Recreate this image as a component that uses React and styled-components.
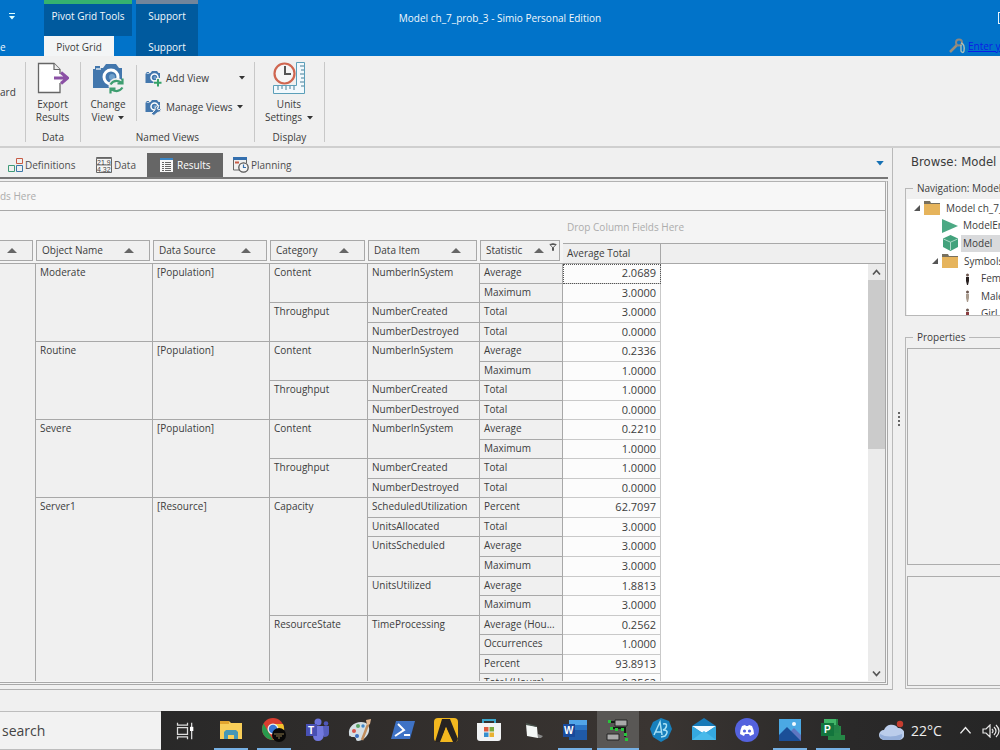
import React from "react";
import styled, { createGlobalStyle } from "styled-components";

const GlobalStyle = createGlobalStyle`
  * { box-sizing: border-box; }
  body {
    margin: 0;
    overflow: hidden;
    background: #f0f0f0;
    color: #3c3c3c;
    font-family: "Open Sans", "Noto Sans", sans-serif;
    font-size: 10px;
    line-height: 13px;
  }
  button, input { font: inherit; color: inherit; }
  button { padding: 0; border: 0; background: none; white-space: nowrap; }
  ul { list-style: none; margin: 0; padding: 0; }
  svg { display: block; flex: none; }
`;

const Window = styled.div`
  display: flex;
  flex-direction: column;
  height: 100vh;
  overflow: hidden;
`;

/* ---------- title bar ---------- */
const TitleBar = styled.header`
  display: grid;
  flex: none;
  height: 56px;
  background: #0173c9;
  color: #f2f8fc;
`;
const TitleRow = styled.div`
  grid-area: 1 / 1;
  display: flex;
  min-width: 0;
`;
const AppTitle = styled.h1`
  grid-area: 1 / 1;
  margin: 0;
  padding-top: 12px;
  text-align: center;
  font-size: 10px;
  font-weight: 400;
  line-height: 13px;
`;
const QuickAccess = styled.div`
  display: flex;
  flex-direction: column;
  justify-content: space-between;
  width: 44px;
  padding: 13px 0 2px;
  button { align-self: flex-start; }
`;
const QuickArrow = styled.button`
  margin-left: 9px;
`;
const ToolTab = styled.div`
  display: flex;
  flex-direction: column;
  width: ${(p) => p.$width}px;
  margin-right: 4px;
  border-top: ${(p) => p.$line};
  background: linear-gradient(#005a9e, #005a9e) no-repeat;
  background-size: 100% ${(p) => (p.$full ? "100%" : "32px")};
`;
const ToolCaption = styled.div`
  height: ${(p) => p.$h}px;
  padding-top: 6px;
  text-align: center;
  white-space: nowrap;
`;
const RibbonTab = styled.button`
  align-self: ${(p) => (p.$active ? "flex-start" : "stretch")};
  flex: 1;
  width: ${(p) => (p.$active ? "70px" : "auto")};
  padding: 3px 0 0;
  background: ${(p) => (p.$active ? "#f3f5f6" : "transparent")};
  color: ${(p) => (p.$active ? "#3c3c3c" : "#f2f8fc")};
`;
const Account = styled.div`
  display: flex;
  flex-direction: column;
  justify-content: space-between;
  align-items: flex-end;
  width: 51px;
  margin-left: auto;
  padding: 12px 0 2px;
  overflow: hidden;
`;
const WindowButton = styled.button`
  width: 2px;
  height: 12px;
  border: 1px solid #e8f3fb;
  border-right: 0;
`;
const License = styled.div`
  display: flex;
  align-items: center;
  gap: 2px;
  width: 100%;
  white-space: nowrap;
  a { color: #0a1ee6; }
`;

/* ---------- ribbon ---------- */
const Ribbon = styled.section`
  display: flex;
  flex: none;
  height: 92px;
  padding: 6px 0 4px;
  border-bottom: 2px solid #cfcfcf;
`;
const Group = styled.div`
  display: flex;
  flex-direction: column;
  width: ${(p) => p.$width}px;
  border-right: 1px solid #c8c8c8;
`;
const GroupBody = styled.div`
  display: flex;
  flex: 1;
`;
const GroupLabel = styled.div`
  flex: none;
  height: 11px;
  text-align: center;
`;
const BigButton = styled.button`
  display: flex;
  flex-direction: column;
  align-items: center;
  justify-content: flex-start;
  flex: ${(p) => (p.$width ? "none" : "1")};
  width: ${(p) => (p.$width ? p.$width + "px" : "auto")};
  gap: 4px;
  padding-right: 1px;
`;
const MenuLine = styled.span`
  display: flex;
  align-items: center;
  justify-content: center;
  gap: 5px;
`;
const SmallButtons = styled.div`
  display: flex;
  flex: 1;
  flex-direction: column;
  gap: 11px;
  margin: 3px 0 10px;
  padding: 4px 9px 0 8px;
  border-left: 1px solid #c8c8c8;
`;
const SmallButton = styled.button`
  display: flex;
  align-items: center;
  gap: 4px;
  height: 18px;
  svg:last-child { margin-left: ${(p) => (p.$push ? "auto" : "0")}; }
`;
const Clipped = styled.span`
  padding-top: 24px;
`;

/* ---------- workspace ---------- */
const Workspace = styled.div`
  display: flex;
  flex: 1;
  min-height: 0;
`;
const Document = styled.main`
  display: flex;
  flex: 1;
  flex-direction: column;
  min-width: 0;
  padding-right: 4px;
  padding-bottom: 4px;
  border-right: 1px solid #b9b9b9;
  border-bottom: 1px solid #b0b0b0;
`;
const Tabs = styled.nav`
  display: flex;
  flex: none;
  align-items: stretch;
  height: 31px;
  padding-top: 5px;
  border-bottom: 2px solid #767676;
`;
const Tab = styled.button`
  display: flex;
  align-items: center;
  gap: ${(p) => p.$gap || 2}px;
  width: ${(p) => p.$width}px;
  padding-left: ${(p) => p.$inset}px;
  background: ${(p) => (p.$active ? "#666" : "transparent")};
  color: ${(p) => (p.$active ? "#fff" : "#4e4e4e")};
`;
const TabMenu = styled.button`
  margin-left: auto;
  padding: 0 4px 4px 0;
`;
const Pivot = styled.section`
  display: flex;
  flex: 1;
  flex-direction: column;
  min-height: 0;
  margin-top: 2px;
  padding-bottom: 1px;
  border: 1px solid #b2b2b2;
  border-left: 0;
  border-right: 3px double #a8a8a8;
  border-bottom: 3px double #a8a8a8;
  background: #f4f4f4;
`;
const DropArea = styled.div`
  flex: none;
  height: ${(p) => p.$h}px;
  padding: ${(p) => p.$top}px 0 0 ${(p) => p.$left}px;
  border-bottom: ${(p) => (p.$line ? "1px solid #a8a8a8" : "0")};
  background: ${(p) => (p.$line ? "#f7f7f7" : "#f4f4f4")};
  color: #acacac;
`;
const GridArea = styled.div`
  display: flex;
  flex: 1;
  min-height: 0;
  overflow: hidden;
  background: #fff;
`;
const TableClip = styled.div`
  flex: 1;
  min-width: 0;
  overflow: hidden;
`;
const Table = styled.table`
  width: 100%;
  height: 455px;
  border-collapse: separate;
  border-spacing: 0;
  table-layout: fixed;
`;
const HeadCell = styled.th`
  height: 25px;
  padding: 1px 3px 2px 0;
  border-bottom: 1px solid #a8a8a8;
  background: #f4f4f4;
  font-weight: 400;
  vertical-align: top;
`;
const ValueHead = styled.th`
  height: 25px;
  padding: 4px 0 0;
  border-bottom: 1px solid #a8a8a8;
  background: #f4f4f4;
  font-weight: 400;
  text-align: left;
  div {
    height: 20px;
    padding: 3px 4px 0;
    border-top: 1px solid #a8a8a8;
    border-right: ${(p) => (p.$last ? "0" : "1px solid #a8a8a8")};
    background: #efefef;
  }
`;
const FieldButton = styled.button`
  display: flex;
  align-items: center;
  justify-content: space-between;
  width: 100%;
  height: 21px;
  padding: 0 ${(p) => (p.$filter ? 2 : 15)}px 0 5px;
  border: 1px solid #a8a8a8;
  border-left-width: ${(p) => (p.$cut ? 0 : 1)}px;
  background: #f0f0f0;
  svg + svg { align-self: flex-start; margin-top: 2px; }
`;
const Arrows = styled.span`
  display: flex;
  align-items: center;
  align-self: stretch;
  gap: 5px;
`;
const Cell = styled.td`
  height: 19px;
  padding: 2px 1px 0 4px;
  overflow: hidden;
  border-right: 1px solid #a8a8a8;
  border-bottom: 1px solid #a8a8a8;
  background: #f0f0f0;
  vertical-align: top;
  white-space: nowrap;
  text-overflow: ellipsis;
`;
const ValueCell = styled(Cell)`
  padding: 2px 4px 0;
  border-color: #c9c9c9;
  background: #fcfcfc;
  font-size: 11px;
  text-align: right;
  outline: ${(p) => (p.$focus ? "1px dotted #555" : "none")};
  outline-offset: -1px;
`;
const Blank = styled.td`
  background: #fff;
`;
const Body = styled.tbody`
  tr { height: 19px; }
`;
const ScrollColumn = styled.div`
  display: flex;
  flex: none;
  flex-direction: column;
  width: 17px;
  background: #ebebeb;
`;
const ScrollCap = styled.div`
  height: 25px;
  padding-top: 4px;
  background: #f4f4f4;
  div { height: 21px; border: solid #a8a8a8; border-width: 1px 0; background: #efefef; }
`;
const ScrollButton = styled.button`
  display: grid;
  place-items: center;
  height: 16px;
`;
const ScrollTrack = styled.div`
  flex: 1;
`;
const ScrollThumb = styled.div`
  height: 44%;
  background: #cbcbcb;
`;

/* ---------- side panel ---------- */
const Splitter = styled.div`
  display: grid;
  place-items: center;
  width: 12px;
`;
const Side = styled.aside`
  display: flex;
  flex-direction: column;
  width: 95px;
  padding: 6px 0 1px;
  overflow: hidden;
`;
const SideTitle = styled.h2`
  margin: 0 0 12px 6px;
  font-family: "DejaVu Sans Condensed", "DejaVu Sans", sans-serif;
  font-size: 13px;
  font-weight: 400;
  line-height: 16px;
  white-space: nowrap;
`;
const Panel = styled.fieldset`
  display: flex;
  flex: ${(p) => (p.$grow ? "1" : "none")};
  flex-direction: column;
  min-width: 0;
  margin: 0 0 ${(p) => (p.$grow ? 0 : 15)}px;
  padding: ${(p) => (p.$grow ? "4px 0 2px 1px" : "4px 0 0 1px")};
  border: 1px solid #b8b8b8;
  border-right: 0;
  legend { margin-left: 6px; padding: 0 4px; white-space: nowrap; }
`;
const Tree = styled.ul`
  height: 116px;
  overflow: hidden;
  background: #fff;
`;
const TreeRow = styled.li`
  display: flex;
  align-items: center;
  gap: ${(p) => p.$gap || 3}px;
  height: ${(p) => (p.$tight ? 17 : 18)}px;
  padding-left: ${(p) => p.$indent}px;
  button {
    flex: 1;
    height: 17px;
    padding-left: 2px;
    background: ${(p) => (p.$selected ? "#d9dadc" : "transparent")};
    text-align: left;
  }
`;
const PropertyBox = styled.div`
  flex: ${(p) => p.$flex} 1 0;
  margin-bottom: ${(p) => p.$gap}px;
  border: 1px solid #adadad;
  border-right: 0;
`;
const StatusBar = styled.div`
  flex: none;
  height: 21px;
`;

/* ---------- taskbar ---------- */
const Taskbar = styled.footer`
  display: flex;
  flex: none;
  height: 39px;
  background: linear-gradient(90deg, #232526, #332f2d 45%, #3a3532 65%, #2a2929 85%, #262626);
  color: #eee;
`;
const Search = styled.input`
  width: 161px;
  padding: 0 3px 0 2px;
  border: 1px solid #bdbdbd;
  border-width: 1px 0;
  border-radius: 0;
  background: #f2f2f2;
  color: #444;
  font-size: 14px;
`;
const TaskButton = styled.button`
  display: grid;
  place-items: center;
  width: ${(p) => p.$width || 43}px;
  height: 39px;
  background: ${(p) => (p.$active ? "linear-gradient(#595755, #595755) center / 42px 100% no-repeat" : "none")};
`;
const TaskSlot = styled.span`
  display: grid;
  place-items: center;
  width: ${(p) => (p.$wide ? 42 : 34)}px;
  height: 39px;
  border-bottom: 2px solid ${(p) => (p.$open ? "#76b0e4" : "transparent")};
`;
const Tray = styled.div`
  display: flex;
  flex: none;
  align-items: center;
  width: 121px;
  margin-left: auto;
  overflow: hidden;
`;
const Weather = styled.button`
  display: flex;
  align-items: center;
  gap: 7px;
  width: 84px;
  font-size: 14px;
`;
const TrayButton = styled.button`
  margin-right: 10px;
`;

/* ---------- small glyphs ---------- */
const Down = ({ color = "#333", w = 6 }) => (
  <svg width={w} height={w === 6 ? 4 : 5} viewBox="0 0 6 4"><path d="M0 0h6L3 3.6z" fill={color} /></svg>
);
const Up = () => (
  <svg width="10" height="5" viewBox="0 0 10 5"><path d="M0 5h10L5 0z" fill="#666" /></svg>
);
const Filter = () => (
  <svg width="8" height="8" viewBox="0 0 8 8"><path d="M.8 1.5Q4-.2 7.2 1.5L4.5 4.2V7.5h-1V4.2zM1.2 1.5h5.6" fill="none" stroke="#555" /></svg>
);
const Chevron = ({ flip, color = "#555", w = 9, s = 1.7 }) => (
  <svg width={w} height={w} viewBox="0 0 9 9"><path d={flip ? "M1 2.5 4.5 6.5 8 2.5" : "M1 6.5 4.5 2.5 8 6.5"} fill="none" stroke={color} strokeWidth={s} /></svg>
);
const ExportIcon = () => (
  <svg width="32" height="32" viewBox="0 0 32 32">
    <path d="M23 12V7.500L17 1.500H1.500V30.500H23V21" fill="#fff" stroke="#666" strokeWidth="1.300" />
    <path d="M17 1.500V7.500h6" fill="#eee" stroke="#666" strokeWidth="1.200" />
    <path d="M17 16h12M24 10.500l6.500 5.500-6.500 5.500" fill="none" stroke="#8b50a5" strokeWidth="3" />
  </svg>
);
const Camera = () => (
  <>
    <path d="M1 7h2V4h5v2h3l3-4h10l3 4h3v20H1z" fill="#4377ad" />
    <path d="M4 7h5" stroke="#dce9f3" strokeWidth="1.500" />
    <circle cx="19" cy="15" r="7" fill="#4377ad" stroke="#fff" strokeWidth="3" />
    <circle cx="20" cy="15" r="3" fill="#6fa0cc" />
  </>
);
const ChangeIcon = () => (
  <svg width="32" height="32" viewBox="0 0 32 32">
    <Camera />
    <circle cx="24.500" cy="24" r="8" fill="#f0f0f0" />
    <path d="M18.500 22.500q4-6 11-2M30.500 16.500v5h-5M30.500 25.500q-4 6-11 2M18.500 31.500v-5h5" fill="none" stroke="#3f9e70" strokeWidth="2.200" />
  </svg>
);
const AddViewIcon = () => (
  <svg width="17" height="17" viewBox="0 0 34 34">
    <Camera />
    <path d="M26 16v18M17 25h18" stroke="#f0f0f0" strokeWidth="8" />
    <path d="M26 18v15M18 25.500h15" stroke="#35a268" strokeWidth="4" />
  </svg>
);
const ManageIcon = () => (
  <svg width="17" height="17" viewBox="0 0 34 34">
    <Camera />
    <path d="M12 30 20 22q-1-9 8-9l-4 6 4 3 4-4q1 8-7 9l-7 6z" fill="#4377ad" stroke="#f0f0f0" strokeWidth="2" />
  </svg>
);
const UnitsIcon = () => (
  <svg width="32" height="32" viewBox="0 0 32 32">
    <path d="M23.500.500h8v31H.500v-8h23z" fill="#f2f9fd" stroke="#5b9fb9" />
    <path d="M5 24v4M9 24v3M13 24v4M17 24v3M21 24v4M31 4h-4M31 8h-3M31 12h-4M31 16h-3M31 20h-4M31 24h-3" stroke="#467f98" />
    <circle cx="11.500" cy="11.500" r="10" fill="#f6f6f6" stroke="#cf6650" strokeWidth="2.200" />
    <path d="M12 4v8h6" fill="none" stroke="#555" strokeWidth="2" />
  </svg>
);
const KeyIcon = () => (
  <svg width="17" height="16" viewBox="0 0 17 16">
    <path d="M1 14 8 7" stroke="#9a8e79" strokeWidth="2.500" />
    <circle cx="10" cy="4.500" r="3" fill="none" stroke="#8c8880" strokeWidth="2" />
    <path d="M12 5q4 1 3 8-1 3-3 0V7" fill="none" stroke="#a9bfb9" strokeWidth="1.400" />
  </svg>
);
const DefinitionsIcon = () => (
  <svg width="15" height="16" viewBox="0 0 15 16" fill="none">
    <path d="M8.500 1.500h6v5h-6z" stroke="#c75b45" /><path d="M.500 8.500h6v6h-6z" stroke="#3e9b78" /><path d="M8.500 8.500h6v6h-6z" stroke="#3c78a8" />
  </svg>
);
const DataIcon = () => (
  <svg width="16" height="16" viewBox="0 0 16 16">
    <path d="M.500 .500h15v15H.500z" fill="#f5f5f5" stroke="#666" />
    <path d="M0 1.500h16M0 8h16" stroke="#777" />
    <g fill="#444" fontFamily="Liberation Sans" fontSize="7"><text x="1" y="7.500">21.9</text><text x="1" y="14.500">4.32</text></g>
  </svg>
);
const ResultsIcon = () => (
  <svg width="13" height="14" viewBox="0 0 13 14">
    <path d="M0 0h13v14H0z" fill="#f8f8f8" /><path d="M0 0h13v2H0z" fill="#3c86c5" />
    <path d="M2 4.500h2M5 4.500h6M2 6.500h2M5 6.500h6M2 8.500h2M5 8.500h6M2 10.500h2M5 10.500h6M2 12.500h2M5 12.500h6" stroke="#666" />
  </svg>
);
const PlanningIcon = () => (
  <svg width="16" height="16" viewBox="0 0 16 16">
    <path d="M.500 1v12h6M13.500 6V1" fill="none" stroke="#666" /><path d="M0 0h14v3H0z" fill="#346fae" />
    <path d="M2 5.500h4" stroke="#c75b45" strokeWidth="2" />
    <circle cx="10.500" cy="10.500" r="4.700" fill="#f5f5f5" stroke="#555" strokeWidth="1.300" /><path d="M10.500 7.500v3H13" fill="none" stroke="#346fae" strokeWidth="1.200" />
  </svg>
);
const Expander = () => (
  <svg width="6" height="6" viewBox="0 0 6 6"><path d="M6 0v6H0z" fill="#555" /></svg>
);
const Folder = () => (
  <svg width="16" height="14" viewBox="0 0 16 14"><path d="M0 0h6l1 2h9v3H0z" fill="#77705f" /><path d="M0 3h16v11H0z" fill="#e6b45c" /></svg>
);
const Play = () => (
  <svg width="16" height="16" viewBox="0 0 16 16"><path d="M0 1v14l16-7z" fill="#4ca984" /></svg>
);
const Cube = () => (
  <svg width="15" height="16" viewBox="0 0 15 16"><path d="M7.500 0 15 3.500v8.500L7.500 16 0 12V3.500z" fill="#43a27c" /><path d="M.500 4 7.500 7.200 14.500 4M7.500 7.200V15" fill="none" stroke="#b8e0cf" strokeWidth=".9" /></svg>
);
const Figure = ({ color }) => (
  <svg width="5" height="12" viewBox="0 0 5 12"><circle cx="2.500" cy="2" r="1.500" fill="#6d5850" /><path d="M1 4h3v4l-1 4H2L1 8z" fill={color} /></svg>
);
const Grip = () => (
  <svg width="3" height="15" viewBox="0 0 3 15"><path d="M0 0h2v2H0zM0 4h2v2H0zM0 8h2v2H0zM0 12h2v2H0z" fill="#666" /></svg>
);

/* ---------- taskbar icons ---------- */
const T = ({ children, w = 24 }) => <svg width={w} height={w} viewBox="0 0 24 24">{children}</svg>;
const icons = {
  taskView: <T w={20}><g fill="none" stroke="#ddd" strokeWidth="1.500"><path d="M3 2v3h12V2M3 8h12v8H3zM3 22v-3h12v3M20 2v20" /></g><path d="M18 7h4v5h-4z" fill="#fff" /></T>,
  files: <T><path d="M1 3h9l2 2h11v16H1z" fill="#f8ce59" /><path d="M1 3h9v3H1z" fill="#e2a52f" /><path d="M5 21v-7l2-2h10l2 2v7h-4v-4H9v4z" fill="#4597b6" /></T>,
  chrome: <T>
    <circle cx="11" cy="11" r="11" fill="#d93d30" /><path d="M1.500 5.500 11 22A11 11 0 0 1 1.500 5.500" fill="#289a4d" /><path d="M11 6h10A11 11 0 0 1 11 22l5-8z" fill="#f1c22d" />
    <circle cx="11" cy="11" r="5.500" fill="#eee" /><circle cx="11" cy="11" r="4.200" fill="#3877d4" /><circle cx="17" cy="17" r="7" fill="#080808" /><path d="M12 16h10M14 18h6M16 20h2" stroke="#8c7a4c" />
  </T>,
  teams: <T><circle cx="13" cy="4" r="3.500" fill="#6c73dc" /><circle cx="21" cy="5.500" r="2.300" fill="#5058ba" /><path d="M9 8h10v9q-1 6-6 6t-5-6z" fill="#7279df" /><path d="M18 8h6v7q0 4-5 4z" fill="#565ebe" /><path d="M1 6h11v12H1z" fill="#4850b3" /><text x="3" y="16" fill="#fff" fontSize="10" fontWeight="bold" fontFamily="Liberation Sans">T</text></T>,
  paint: <T><path d="M1 16C0 9 6 4 13 4s9 5 8 9c-1 6-7 10-11 10-3 0-1-4-4-4-3 0-5 0-5-3z" fill="#d5dfe4" /><circle cx="6" cy="13" r="2" fill="#d8564a" /><circle cx="10" cy="8" r="2" fill="#58a363" /><circle cx="15" cy="8" r="1.700" fill="#4287c7" /><circle cx="9" cy="18" r="2" fill="#3a6ec0" /><path d="M14 22 21 4" stroke="#c28e5d" strokeWidth="2.500" /><path d="m18 2 5-1-1 5-3 1z" fill="#e3b891" /></T>,
  shell: <T><path d="M5 3h19l-5 18H0z" fill="#3e72c5" /><path d="m7 6 6 6-9 6M13 17h6" fill="none" stroke="#fff" strokeWidth="2" /></T>,
  ansys: <T><rect width="24" height="24" rx="4" fill="#f3b81f" /><path d="M8 1h8l8 20-2 3h-3L12 9 6 24H1z" fill="#272321" /><path d="m12 9 5 15H7z" fill="#f3b81f" /></T>,
  store: <T><path d="M6 6V2h12v4" fill="none" stroke="#3ba6cb" strokeWidth="2" /><path d="M0 5h24v15q0 3-3 3H3q-3 0-3-3z" fill="#f1f3f4" /><path d="M7 9h4.500v4.500H7z" fill="#dd5a3d" /><path d="M12.500 9H17v4.500h-4.500z" fill="#79a83d" /><path d="M7 14.500h4.500V19H7z" fill="#368fce" /><path d="M12.500 14.500H17V19h-4.500z" fill="#e8b232" /></T>,
  device: <T><path d="m6 6 11 3 1 11-11-2z" fill="#f4f7f6" /><path d="m6 5 11 3v1L6 7z" fill="#49534c" /><path d="m18 16 5 2-2 2h-3z" fill="#888" /></T>,
  word: <T><path d="M6 2h18v20H6z" fill="#2b75c6" /><path d="M6 2h18v5H6z" fill="#52a5e8" /><path d="M6 12h18v10H6z" fill="#205aa7" /><path d="M0 6h12v13H0z" fill="#194a9b" /><text x="1" y="16" fill="#fff" fontSize="10" fontWeight="bold" fontFamily="Liberation Sans">W</text></T>,
  simio: <T><path d="M9 4H3M4 10h15v9M9 18H2" fill="none" stroke="#151b15" strokeWidth="2" /><path d="M9 2h12v6H9zM1 16h12v6H1z" fill="#aaa" stroke="#252525" /><path d="M2 2h3v3H2zM4 9h3v3H4zM9 10h3v3H9zM15 10h3v3h-3zM18 15h3v3h-3zM19 20h3v3h-3z" fill="#28c53b" /></T>,
  azure: <T><path d="M4 4 12 0l8 3 3 8-4 9-7 4-8-5-3-8z" fill="#1780bd" /><path d="m5 17 6-13 2 13M7 14h6M14 6q6-1 2 5l-2 1q7 0 2 6l-4 1" fill="none" stroke="#a7e0f5" strokeWidth="1.500" /></T>,
  mail: <T><path d="M0 8 12 0l12 8v7H0z" fill="#1679b8" /><path d="M0 8h24L12 16z" fill="#f3faff" /><path d="M0 8 12 16 24 8v14H0z" fill="#35a9e1" /><path d="M0 22 12 13l12 9z" fill="#47b9ea" /></T>,
  discord: <T><circle cx="12" cy="12" r="12" fill="#5462de" /><path d="m7 8 3-1 1 1h2l1-1 3 1q2 4 2 8l-4 2-1-2h-4l-1 2-4-2q0-4 2-8z" fill="#fff" /><circle cx="9.500" cy="13" r="1.600" fill="#5462de" /><circle cx="14.500" cy="13" r="1.600" fill="#5462de" /></T>,
  photos: <T><path d="M1 1h22v22H1z" fill="#4ba9e4" /><path d="m11 15 5-5 7 7v6H11z" fill="#5e76c1" /><path d="m1 17 8-8 14 14H1z" fill="#1b4f98" /><circle cx="16" cy="6" r="2" fill="#f4fbff" /></T>,
  project: <T><path d="M3 1h14v7h3v9h4v5H7V8H3z" fill="#258746" /><path d="M3 1h12v6H3z" fill="#42b669" /><path d="M13 7h5v8h-5z" fill="#238347" /><path d="M0 5h13v13H0z" fill="#13753d" /><text x="3" y="15" fill="#fff" fontSize="10" fontWeight="bold" fontFamily="Liberation Sans">P</text></T>,
};
const CloudIcon = () => (
  <svg width="25" height="22" viewBox="0 0 25 22"><path d="M5 20a5 5 0 0 1 0-10 8 8 0 0 1 14-2 6 6 0 0 1 1 12z" fill="#bbcdeb" /><path d="M5 20q-5-2-4-6 9 5 22 0 1 4-3 6z" fill="#94aed9" /><circle cx="21" cy="4" r="3.200" fill="#c53d2f" /></svg>
);
const SpeakerIcon = () => (
  <svg width="18" height="14" viewBox="0 0 18 14" fill="none" stroke="#e8e8e8" strokeWidth="1.200"><path d="M1 5h3l4-4v12L4 9H1zM10 5q2 2 0 4M12 3q4 4 0 8M14 1q6 6 0 12" /></svg>
);

/* ---------- data ---------- */
const population = () => [
  { name: "Content", items: [["NumberInSystem", ["Average", "Maximum"]]] },
  { name: "Throughput", items: [["NumberCreated", ["Total"]], ["NumberDestroyed", ["Total"]]] },
];
const objects = [
  { name: "Moderate", source: "[Population]", categories: population() },
  { name: "Routine", source: "[Population]", categories: population() },
  { name: "Severe", source: "[Population]", categories: population() },
  {
    name: "Server1", source: "[Resource]", categories: [
      { name: "Capacity", items: [["ScheduledUtilization", ["Percent"]], ["UnitsAllocated", ["Total"]], ["UnitsScheduled", ["Average", "Maximum"]], ["UnitsUtilized", ["Average", "Maximum"]]] },
      { name: "ResourceState", items: [["TimeProcessing", ["Average (Hou...", "Occurrences", "Percent", "Total (Hours)"]]] },
    ],
  },
];
const values = ["2.0689", "3.0000", "3.0000", "0.0000", "0.2336", "1.0000", "1.0000", "0.0000", "0.2210", "1.0000", "1.0000", "0.0000", "62.7097", "3.0000", "3.0000", "3.0000", "1.8813", "3.0000", "0.2562", "1.0000", "93.8913", "0.2562"];

const countItem = (item) => item[1].length;
const countCategory = (c) => c.items.reduce((n, i) => n + countItem(i), 0);
const countObject = (o) => o.categories.reduce((n, c) => n + countCategory(c), 0);

function buildRows() {
  const rows = [];
  objects.forEach((o) => o.categories.forEach((c, ci) => c.items.forEach((item, ii) => item[1].forEach((stat, si) => {
    const cells = [];
    if (!ci && !ii && !si) {
      if (!rows.length) cells.push(["", values.length]);
      cells.push([o.name, countObject(o)], [o.source, countObject(o)]);
    }
    if (!ii && !si) cells.push([c.name, countCategory(c)]);
    if (!si) cells.push([item[0], countItem(item)]);
    cells.push([stat, 1]);
    rows.push(cells);
  }))));
  return rows;
}

const columns = [36, 117, 117, 98, 112, 83, 98];
const fields = ["", "Object Name", "Data Source", "Category", "Data Item", "Statistic"];
const tasks = [
  ["files", 1], ["chrome", 1], ["teams"], ["paint"], ["shell"], ["ansys"], ["store"], ["device"], ["word", 1],
  ["simio", 1, 1], ["azure"], ["mail"], ["discord"], ["photos", 1], ["project", 1],
];

function PivotTable() {
  return (
    <Table>
      <colgroup>
        {columns.map((w, i) => <col key={i} width={w} />)}
        <col />
      </colgroup>
      <thead>
        <tr>
          {fields.map((f, i) => (
            <HeadCell key={i}>
              <FieldButton $cut={i === 0} $filter={i === 5} aria-label={f || "Object Type"}>
                <span>{f}</span>
                <Arrows><Up />{i === 5 && <Filter />}</Arrows>
              </FieldButton>
            </HeadCell>
          ))}
          <ValueHead><div>Average Total</div></ValueHead>
          <ValueHead $last><div /></ValueHead>
        </tr>
      </thead>
      <Body>
        {buildRows().map((cells, r) => (
          <tr key={r}>
            {cells.map(([text, span], i) => <Cell key={i} rowSpan={span}>{text}</Cell>)}
            <ValueCell $focus={r === 0}>{values[r]}</ValueCell>
            <Blank />
          </tr>
        ))}
      </Body>
    </Table>
  );
}

export default function App() {
  return (
    <Window>
      <GlobalStyle />
      <TitleBar>
        <AppTitle>Model ch_7_prob_3 - Simio Personal Edition</AppTitle>
        <TitleRow>
          <QuickAccess>
            <QuickArrow aria-label="Customize">
              <svg width="6" height="7" viewBox="0 0 6 7"><path d="M0 .5h6" stroke="#dff" /><path d="M0 3h6L3 6.500z" fill="#dff" /></svg>
            </QuickArrow>
            <button>e</button>
          </QuickAccess>
          <ToolTab $width={88} $line="4px solid #35b26f">
            <ToolCaption $h={32}>Pivot Grid Tools</ToolCaption>
            <RibbonTab $active>Pivot Grid</RibbonTab>
          </ToolTab>
          <ToolTab $width={62} $line="4px solid #72859b" $full>
            <ToolCaption $h={32}>Support</ToolCaption>
            <RibbonTab>Support</RibbonTab>
          </ToolTab>
          <Account>
            <WindowButton aria-label="Minimize" />
            <License><KeyIcon /><a href="#license">Enter y</a></License>
          </Account>
        </TitleRow>
      </TitleBar>

      <Ribbon>
        <Group $width={26}><Clipped>ard</Clipped></Group>
        <Group $width={55}>
          <GroupBody><BigButton><ExportIcon /><span>Export<br />Results</span></BigButton></GroupBody>
          <GroupLabel>Data</GroupLabel>
        </Group>
        <Group $width={174}>
          <GroupBody>
            <BigButton $width={55}><ChangeIcon /><span>Change<MenuLine>View<Down /></MenuLine></span></BigButton>
            <SmallButtons>
              <SmallButton $push><AddViewIcon />Add View<Down /></SmallButton>
              <SmallButton><ManageIcon />Manage Views<Down /></SmallButton>
            </SmallButtons>
          </GroupBody>
          <GroupLabel>Named Views</GroupLabel>
        </Group>
        <Group $width={70}>
          <GroupBody><BigButton><UnitsIcon /><span>Units<MenuLine>Settings<Down /></MenuLine></span></BigButton></GroupBody>
          <GroupLabel>Display</GroupLabel>
        </Group>
      </Ribbon>

      <Workspace>
        <Document>
          <Tabs>
            <Tab $width={96} $inset={8}><DefinitionsIcon />Definitions</Tab>
            <Tab $width={51} $inset={0}><DataIcon />Data</Tab>
            <Tab $width={76} $inset={13} $gap={4} $active><ResultsIcon />Results</Tab>
            <Tab $width={80} $inset={10}><PlanningIcon />Planning</Tab>
            <TabMenu aria-label="Tab list"><Down color="#1571b4" w={8} /></TabMenu>
          </Tabs>
          <Pivot>
            <DropArea $h={29} $top={8} $left={0} $line>ds Here</DropArea>
            <DropArea $h={28} $top={10} $left={567}>Drop Column Fields Here</DropArea>
            <GridArea>
              <TableClip><PivotTable /></TableClip>
              <ScrollColumn>
                <ScrollCap><div /></ScrollCap>
                <ScrollButton aria-label="Scroll up"><Chevron /></ScrollButton>
                <ScrollTrack><ScrollThumb /></ScrollTrack>
                <ScrollButton aria-label="Scroll down"><Chevron flip /></ScrollButton>
              </ScrollColumn>
            </GridArea>
          </Pivot>
        </Document>
        <Splitter><Grip /></Splitter>
        <Side>
          <SideTitle>Browse: Model</SideTitle>
          <Panel>
            <legend>Navigation: Model</legend>
            <Tree>
              <TreeRow $indent={7} $gap={4}><Expander /><Folder /><button>Model ch_7_</button></TreeRow>
              <TreeRow $tight $indent={35}><Play /><button>ModelEn</button></TreeRow>
              <TreeRow $indent={36} $selected><Cube /><button>Model</button></TreeRow>
              <TreeRow $indent={25} $gap={4}><Expander /><Folder /><button>Symbols</button></TreeRow>
              <TreeRow $tight $indent={58} $gap={9}><Figure color="#282020" /><button>Fem</button></TreeRow>
              <TreeRow $indent={58} $gap={9}><Figure color="#a99b8d" /><button>Male</button></TreeRow>
              <TreeRow $tight $indent={58} $gap={9}><Figure color="#8a3d40" /><button>Girl</button></TreeRow>
            </Tree>
          </Panel>
          <Panel $grow>
            <legend>Properties</legend>
            <PropertyBox $flex={2} $gap={11} />
            <PropertyBox $flex={1} $gap={0} />
          </Panel>
        </Side>
      </Workspace>
      <StatusBar />

      <Taskbar>
        <Search aria-label="Search" defaultValue="search" />
        <TaskButton $width={48} aria-label="Task view">{icons.taskView}</TaskButton>
        {tasks.map(([name, open, active]) => (
          <TaskButton key={name} $active={active} aria-label={name}>
            <TaskSlot $open={open} $wide={active}>{icons[name]}</TaskSlot>
          </TaskButton>
        ))}
        <Tray>
          <Weather><CloudIcon />22°C</Weather>
          <TrayButton aria-label="Hidden icons"><Chevron w={13} s={1} color="#eee" /></TrayButton>
          <button aria-label="Volume"><SpeakerIcon /></button>
        </Tray>
      </Taskbar>
    </Window>
  );
}
